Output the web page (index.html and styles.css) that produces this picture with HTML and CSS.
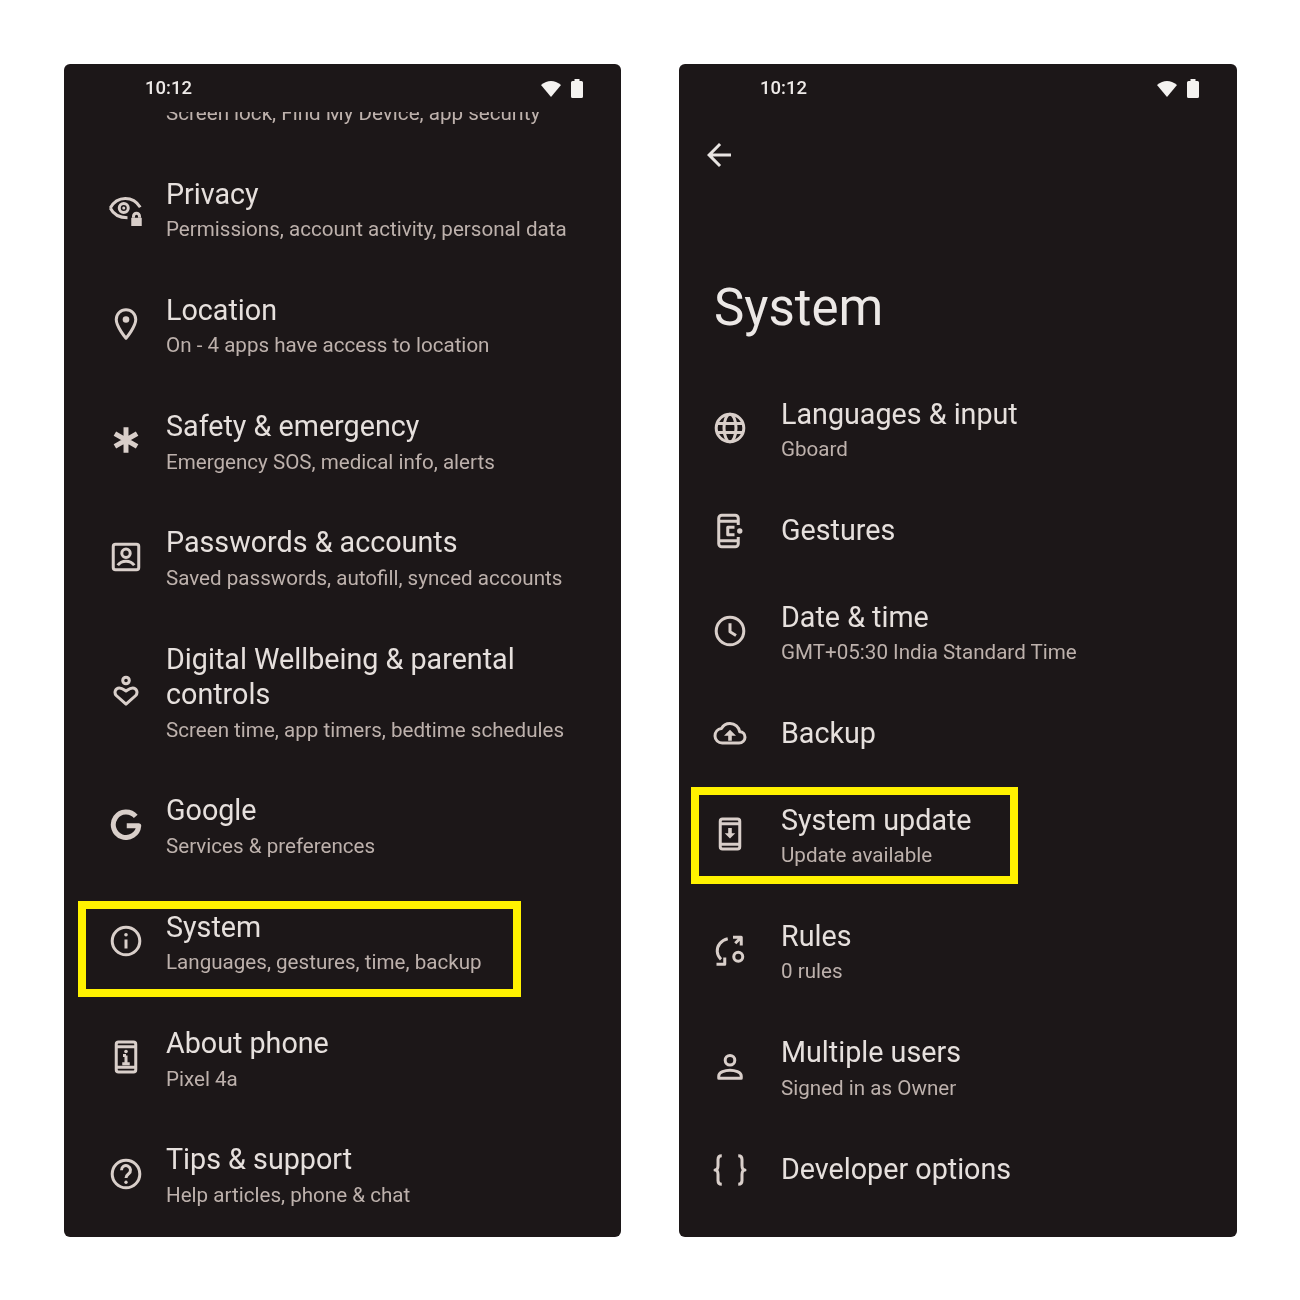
FILE: index.html
```html
<!DOCTYPE html>
<html lang="en">
<head>
<meta charset="utf-8">
<title>Android settings: System update</title>
<link rel="stylesheet" href="styles.css">
</head>
<body>
<main class="page">

<section class="phone phone-left">
  <header class="status">
    <span class="clock">10:12</span>
    <span class="status-icons">
      <svg class="wifi" viewBox="0 0 20 17"><path d="M0 5Q10-3 20 5L10 17Z"/></svg>
      <svg class="battery" viewBox="0 0 12 19"><path d="M3.500 0h5v2h2a1.500 1.500 0 0 1 1.500 1.500V17.500a1.500 1.500 0 0 1-1.500 1.500h-9A1.500 1.500 0 0 1 0 17.500V3.500A1.500 1.500 0 0 1 1.500 2h2Z"/></svg>
    </span>
  </header>
  <div class="list">
    <div class="row cut">
      <span class="icon"></span>
      <div class="text"><div class="sub">Screen lock, Find My Device, app security</div></div>
    </div>
    <div class="row">
      <svg class="icon" viewBox="0 0 24 24"><path d="M1.500 10C4 5.500 8 3.700 11.500 3.700S19 5.500 21.500 9.500M1.500 10C3.500 14 7.500 16.500 13 16.500" transform="translate(0 2)"/><circle cx="10.500" cy="12" r="3"/><circle class="solid" cx="10.500" cy="12" r="1"/><path class="solid" d="M15.500 18.500h7v5.500h-7Z"/><path d="M17 18.500v-1a2 2 0 0 1 4 0v1"/></svg>
      <div class="text"><div class="title">Privacy</div><div class="sub">Permissions, account activity, personal data</div></div>
    </div>
    <div class="row">
      <svg class="icon" viewBox="0 0 24 24"><path d="M12 2.500C8.500 2.500 5.500 5.300 5.500 9c0 4.800 6.500 12.500 6.500 12.500S18.500 13.800 18.500 9c0-3.700-3-6.500-6.500-6.500Z"/><circle class="solid" cx="12" cy="9" r="2.200"/></svg>
      <div class="text"><div class="title">Location</div><div class="sub">On - 4 apps have access to location</div></div>
    </div>
    <div class="row">
      <svg class="icon thick" viewBox="0 0 24 24"><path d="M12 3.500V20.500M4.600 7.700 19.400 16.300M19.400 7.700 4.600 16.300"/></svg>
      <div class="text"><div class="title">Safety &amp; emergency</div><div class="sub">Emergency SOS, medical info, alerts</div></div>
    </div>
    <div class="row">
      <svg class="icon" viewBox="0 0 24 24"><rect x="3.500" y="3.500" width="17" height="17" rx="1.500"/><circle cx="12" cy="9.500" r="2.800"/><path d="M6.500 17.500c1.400-2 3.300-2.700 5.500-2.700s4.100.7 5.500 2.700"/></svg>
      <div class="text"><div class="title">Passwords &amp; accounts</div><div class="sub">Saved passwords, autofill, synced accounts</div></div>
    </div>
    <div class="row">
      <svg class="icon" viewBox="0 0 24 24"><circle cx="12" cy="5" r="2.200"/><path d="M12 20.800 5.500 15C3.800 13 5 10 7.500 10c2 0 3 1 4.500 2 1.500-1 2.500-2 4.500-2 2.500 0 3.700 3 2 5Z"/></svg>
      <div class="text"><div class="title">Digital Wellbeing &amp; parental controls</div><div class="sub">Screen time, app timers, bedtime schedules</div></div>
    </div>
    <div class="row">
      <svg class="icon thick" viewBox="0 0 24 24"><path d="M18.500 6.300A8.500 8.500 0 1 0 20.500 12.500H12.500"/></svg>
      <div class="text"><div class="title">Google</div><div class="sub">Services &amp; preferences</div></div>
    </div>
    <div class="row">
      <svg class="icon" viewBox="0 0 24 24"><circle cx="12" cy="12" r="9.200"/><path d="M12 11V17"/><circle class="solid" cx="12" cy="7.800" r="1.200"/></svg>
      <div class="text"><div class="title">System</div><div class="sub">Languages, gestures, time, backup</div></div>
      <span class="mark mark-system"></span>
    </div>
    <div class="row">
      <svg class="icon" viewBox="0 0 24 24"><rect x="5.500" y="2" width="13" height="20" rx="1.500"/><path d="M5.500 5.200H18.500M5.500 18.800H18.500M12 11V16.500M9.500 16.500H14.500M10 11H12"/><circle class="solid" cx="12" cy="8.300" r="1.200"/></svg>
      <div class="text"><div class="title">About phone</div><div class="sub">Pixel 4a</div></div>
    </div>
    <div class="row">
      <svg class="icon" viewBox="0 0 24 24"><circle cx="12" cy="12" r="9.200"/><path d="M9 9.500a3 3 0 1 1 4.800 2.300c-1 .8-1.800 1.300-1.800 2.800"/><circle class="solid" cx="12" cy="17.500" r="1.100"/></svg>
      <div class="text"><div class="title">Tips &amp; support</div><div class="sub">Help articles, phone &amp; chat</div></div>
    </div>
  </div>
</section>

<section class="phone phone-right">
  <header class="status">
    <span class="clock">10:12</span>
    <span class="status-icons">
      <svg class="wifi" viewBox="0 0 20 17"><path d="M0 5Q10-3 20 5L10 17Z"/></svg>
      <svg class="battery" viewBox="0 0 12 19"><path d="M3.500 0h5v2h2a1.500 1.500 0 0 1 1.500 1.500V17.500a1.500 1.500 0 0 1-1.500 1.500h-9A1.500 1.500 0 0 1 0 17.500V3.500A1.500 1.500 0 0 1 1.500 2h2Z"/></svg>
    </span>
  </header>
  <div class="head">
    <svg class="back" viewBox="0 0 24 24"><path d="M20 11H7.830l5.590-5.590L12 4l-8 8 8 8 1.410-1.410L7.830 13H20v-2z"/></svg>
    <h1 class="page-title">System</h1>
  </div>
  <div class="list">
    <div class="row">
      <svg class="icon" viewBox="0 0 24 24"><circle cx="12" cy="12" r="9.200"/><ellipse cx="12" cy="12" rx="4" ry="9.200"/><path d="M3 9H21M3 15H21"/></svg>
      <div class="text"><div class="title">Languages &amp; input</div><div class="sub">Gboard</div></div>
    </div>
    <div class="row single">
      <svg class="icon" viewBox="0 0 24 24"><path d="M17.500 8V3.500a2 2 0 0 0-2-2H6.500a2 2 0 0 0-2 2v17a2 2 0 0 0 2 2h9a2 2 0 0 0 2-2V16M4.500 5.500H17.500M4.500 18.500H17.500M15 9.500H10.500V14.500H15"/><circle class="solid" cx="18.500" cy="12" r="1.800"/></svg>
      <div class="text"><div class="title">Gestures</div></div>
    </div>
    <div class="row">
      <svg class="icon" viewBox="0 0 24 24"><circle cx="12" cy="12" r="9.200"/><path d="M12 6.800V12.500L16 15"/></svg>
      <div class="text"><div class="title">Date &amp; time</div><div class="sub">GMT+05:30 India Standard Time</div></div>
    </div>
    <div class="row single">
      <svg class="icon" viewBox="0 0 24 24"><path d="M18.500 10.500C18 7.500 15.300 5 12 5 9.500 5 7.400 6.300 6.300 8.400 3.800 8.700 2 10.800 2 13.300 2 16 4.200 18 6.800 18H18c2.300 0 4-1.800 4-3.900 0-2-1.500-3.500-3.500-3.600Z"/><path class="solid" d="M12 9.200 16 13.200H13.200V16.500H10.800V13.200H8Z"/></svg>
      <div class="text"><div class="title">Backup</div></div>
    </div>
    <div class="row">
      <svg class="icon" viewBox="0 0 24 24"><rect x="5.500" y="2" width="13" height="20" rx="1.500"/><path d="M5.500 5.200H18.500M5.500 18.800H18.500"/><path class="solid" d="M10.800 8H13.200V11.500H15.500L12 15 8.500 11.500H10.800Z"/></svg>
      <div class="text"><div class="title">System update</div><div class="sub">Update available</div></div>
      <span class="mark mark-update"></span>
    </div>
    <div class="row">
      <svg class="icon" viewBox="0 0 24 24"><path d="M10.500 4.500C6 5.500 3.300 9 3.500 13c.1 2 1 3.800 2.500 5.200M3 21.500H8.500V17M14 3.500H19.500V9M19.500 3.500 15.500 7.500"/><circle cx="17.500" cy="16.500" r="3"/></svg>
      <div class="text"><div class="title">Rules</div><div class="sub">0 rules</div></div>
    </div>
    <div class="row">
      <svg class="icon" viewBox="0 0 24 24"><circle cx="12" cy="7.500" r="3.200"/><path d="M4.500 19.500V18c0-2.500 4.300-3.800 7.500-3.800S19.500 15.500 19.500 18v1.500Z"/></svg>
      <div class="text"><div class="title">Multiple users</div><div class="sub">Signed in as Owner</div></div>
    </div>
    <div class="row single">
      <svg class="icon" viewBox="0 0 24 24"><path d="M6.500 2.500C4.500 2.500 4 3.500 4 5V9c0 1.500-.5 3-2 3 1.500 0 2 1.500 2 3v4c0 1.500.5 2.500 2.500 2.500M17.500 2.500C19.500 2.500 20 3.500 20 5V9c0 1.500.5 3 2 3-1.500 0-2 1.500-2 3v4c0 1.500-.5 2.500-2.500 2.500"/></svg>
      <div class="text"><div class="title">Developer options</div></div>
    </div>
  </div>
</section>

</main>
</body>
</html>
```
FILE: styles.css
```css
* { box-sizing: border-box; }

html, body {
  margin: 0;
  background: #fff;
}

.page {
  display: flex;
  gap: 58px;
  height: 1300px;
  padding: 64px 63px 63px 64px;
  font-family: Roboto, "Liberation Sans", sans-serif;
}

.phone {
  flex: none;
  height: 1173px;
  display: flex;
  flex-direction: column;
  background: #1c1718;
  border-radius: 6px;
  overflow: hidden;
}

.phone-left {
  width: 557px;
}

.phone-right {
  width: 558px;
}

.status {
  flex: none;
  height: 48px;
  display: flex;
  align-items: center;
  justify-content: space-between;
  padding: 0 38.500px 0 81px;
  filter: blur(0.4px);
}

.clock {
  font-size: 18.500px;
  font-weight: 500;
  color: #eeeae8;
}

.status-icons {
  display: flex;
  align-items: center;
  gap: 9.500px;
}

.wifi {
  width: 20px;
  height: 17px;
  fill: #f4f2f0;
}

.battery {
  width: 12px;
  height: 19px;
  fill: #f4f2f0;
}

.head {
  flex: none;
  height: 258px;
  padding: 25px 0 0 22px;
}

.back {
  display: block;
  width: 36px;
  height: 36px;
  fill: #e8e4e2;
  filter: blur(0.4px);
}

.page-title {
  margin: 105px 0 0 13px;
  font-size: 51px;
  line-height: 60px;
  font-weight: 400;
  color: #ece8e6;
  filter: blur(0.4px);
}

.list {
  flex: 1 1 auto;
  min-height: 0;
  overflow: hidden;
}

.row {
  position: relative;
  display: flex;
  align-items: center;
  gap: 16px;
  padding: 26.500px 40px 20.300px 44px;
}

.phone-right .row {
  padding-left: 33px;
}

.row.single {
  padding-bottom: 24.300px;
}

.row.cut {
  margin-top: -42.800px;
}

.icon {
  flex: none;
  width: 36px;
  height: 36px;
  margin-right: 6px;
  margin-bottom: 7px;
  fill: none;
  stroke: #d9cfca;
  stroke-width: 2;
  stroke-linejoin: round;
  filter: blur(0.4px);
}

.phone-right .icon {
  margin-right: 17px;
}

.single .icon {
  margin-bottom: 0;
}

.cut .icon {
  height: 0;
  margin-bottom: 0;
}

.icon.thick {
  stroke-width: 3.300;
}

.icon .solid {
  fill: #d9cfca;
  stroke: none;
}

.text {
  min-width: 0;
  filter: blur(0.4px);
}

.title {
  font-size: 28.700px;
  line-height: 35.500px;
  color: #e6e0dd;
}

.sub {
  font-size: 20.600px;
  line-height: 34px;
  color: #bdb1ac;
}

.mark {
  position: absolute;
  border: 8px solid #fff200;
}

.mark-system {
  top: 18px;
  left: 14px;
  width: 443px;
  height: 96px;
}

.mark-update {
  top: 11px;
  left: 12px;
  width: 327px;
  height: 97px;
}
```
